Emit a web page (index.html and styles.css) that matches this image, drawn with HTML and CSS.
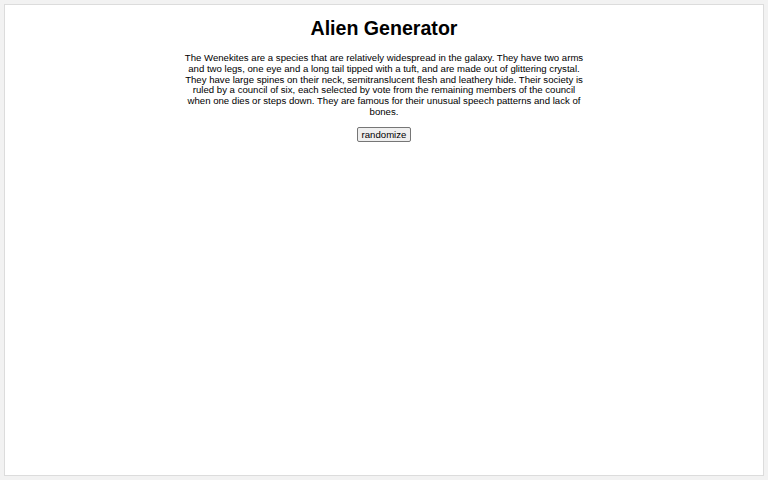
FILE: index.html
```html
<!DOCTYPE html>
<html>
<head>
    <meta charset="UTF-8" />
    <title>Alien Generator</title>
    <link rel="stylesheet" href="styles.css">
</head>
<body>
    <div class="page">
        <h1>Alien Generator</h1>
        <p class="description">The Wenekites are a species that are relatively widespread in the galaxy. They have two arms and two legs, one eye and a long tail tipped with a tuft, and are made out of glittering crystal. They have large spines on their neck, semitranslucent flesh and leathery hide. Their society is ruled by a council of six, each selected by vote from the remaining members of the council when one dies or steps down. They are famous for their unusual speech patterns and lack of bones.</p>
        <div class="actions">
            <button id="randomizeBtn">randomize</button>
        </div>
    </div>
</body>
</html>
```

FILE: styles.css
```css
html, body {
    height: 100%;
}

body {
    margin: 0;
    padding: 4px;
    box-sizing: border-box;
    background: #f2f2f2;
    font-family: 'Liberation Sans', Arial, sans-serif;
    color: #000;
}

.page {
    height: 100%;
    box-sizing: border-box;
    background: #fff;
    border: 1px solid #dcdcdc;
    padding: 12px 20px;
    text-align: center;
}

h1 {
    font-size: 19.6px;
    font-weight: 700;
    margin: 0 0 13px 0;
}

.description {
    max-width: 400px;
    margin: 0 auto;
    font-size: 9.6px;
    line-height: 10.8px;
}

.actions {
    margin-top: 6px;
}

button {
    font-family: 'Liberation Sans', Arial, sans-serif;
    font-size: 9.6px;
    line-height: 11px;
    padding: 1px 4px;
    background: #efefef;
    border: 1px solid #767676;
    border-radius: 2px;
    color: #000;
}
```
